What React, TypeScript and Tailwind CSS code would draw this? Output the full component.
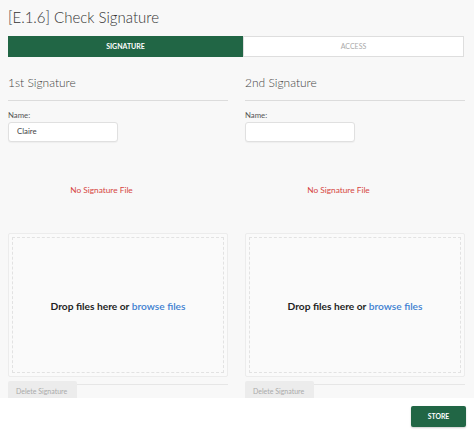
import React from 'react';

type SigProps = {
  title: string;
  name: string;
};

function SignatureColumn({ title, name }: SigProps) {
  return (
    <div className="flex flex-col">
      <h2 className="text-[12px] font-light text-[#444] leading-[18px] pt-[17px] pb-[8px] border-b border-[#dcdcdc]">
        {title}
      </h2>

      <label className="mt-[9px] text-[7.8px] text-[#555] leading-[10px]">Name:</label>
      <div className="mt-[2px] w-[110px] h-[20px] bg-white border border-[#e0e0e0] rounded-[3px] shadow-[0_1px_1px_rgba(0,0,0,0.04)] px-[8px] flex items-center text-[7.8px] text-[#444]">
        {name}
      </div>

      <div className="w-[187px] h-[91px] pt-[6px] flex items-center justify-center text-[8.3px] text-[#d64541]">
        No Signature File
      </div>

      {/* drop zone */}
      <div className="h-[144px] bg-[#fafafa] border border-[#ececec] rounded-[2px] p-[3px]">
        <div className="h-full pt-[4px] border border-dashed border-[#e2e2e2] flex items-center justify-center text-[10.2px] font-bold text-[#1e1e1e]">
          Drop files here or&nbsp;<span className="text-[#3d7fd1] font-semibold">browse files</span>
        </div>
      </div>

      <div className="mt-[7px] border-t border-[#e6e6e6]">
        <button className="block -mt-[4px] w-[69px] h-[22px] bg-[#ececec] rounded-[2px] text-[7px] leading-[10px] text-[#aaa] text-left pl-[8px] pb-[3px]">
          Delete Signature
        </button>
      </div>
    </div>
  );
}

export default function App() {
  return (
    <div className="w-[474px] h-[431px] flex flex-col bg-[#f8f8f8] font-['Lato','Liberation_Sans',sans-serif]">
      <main className="flex-1 overflow-hidden px-[8px]">
        <h1 className="pt-[4px] text-[15px] font-light text-[#333] leading-[26px]">
          [E.1.6] Check Signature
        </h1>

        <div className="mt-[6px] flex h-[21px] w-[456px]">
          <div className="w-[235px] bg-[#216645] flex items-center justify-center text-[7px] font-bold text-white uppercase">
            Signature
          </div>
          <div className="flex-1 bg-white border border-[#dedede] flex items-center justify-center text-[7px] text-[#aaa] uppercase">
            Access
          </div>
        </div>

        <div className="grid grid-cols-[220px_220px] gap-x-[17px]">
          <SignatureColumn title="1st Signature" name="Claire" />
          <SignatureColumn title="2nd Signature" name="" />
        </div>
      </main>

      <footer className="h-[33px] shrink-0 bg-white flex items-center justify-end pr-[8px] pt-[4px]">
        <button className="w-[55px] h-[21px] bg-[#216645] rounded-[2px] text-white text-[6.8px] font-bold shadow-[0_1px_2px_rgba(0,0,0,0.2)]">
          STORE
        </button>
      </footer>
    </div>
  );
}
